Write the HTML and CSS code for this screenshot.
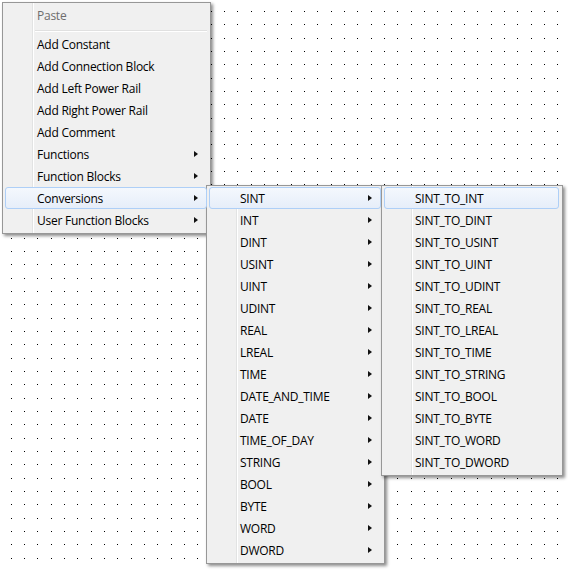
FILE: index.html
```html
<!DOCTYPE html>
<html>
<head>
    <meta name="viewport" content="width=device-width, initial-scale=1">
    <title>Diagram Context Menu</title>
    <link rel="stylesheet" href="styles.css">
</head>
<body>
    <div class="canvas">
        <!-- main context menu -->
        <div class="menu menu-main">
            <div class="menu-item disabled">Paste</div>
            <div class="menu-sep"></div>
            <div class="menu-item">Add Constant</div>
            <div class="menu-item">Add Connection Block</div>
            <div class="menu-item">Add Left Power Rail</div>
            <div class="menu-item">Add Right Power Rail</div>
            <div class="menu-item">Add Comment</div>
            <div class="menu-item has-sub">Functions</div>
            <div class="menu-item has-sub">Function Blocks</div>
            <div class="menu-item has-sub active">Conversions</div>
            <div class="menu-item has-sub">User Function Blocks</div>
        </div>

        <!-- Conversions submenu -->
        <div class="menu menu-types">
            <div class="menu-item has-sub active">SINT</div>
            <div class="menu-item has-sub">INT</div>
            <div class="menu-item has-sub">DINT</div>
            <div class="menu-item has-sub">USINT</div>
            <div class="menu-item has-sub">UINT</div>
            <div class="menu-item has-sub">UDINT</div>
            <div class="menu-item has-sub">REAL</div>
            <div class="menu-item has-sub">LREAL</div>
            <div class="menu-item has-sub">TIME</div>
            <div class="menu-item has-sub">DATE_AND_TIME</div>
            <div class="menu-item has-sub">DATE</div>
            <div class="menu-item has-sub">TIME_OF_DAY</div>
            <div class="menu-item has-sub">STRING</div>
            <div class="menu-item has-sub">BOOL</div>
            <div class="menu-item has-sub">BYTE</div>
            <div class="menu-item has-sub">WORD</div>
            <div class="menu-item has-sub">DWORD</div>
        </div>

        <!-- SINT submenu -->
        <div class="menu menu-sint">
            <div class="menu-item active">SINT_TO_INT</div>
            <div class="menu-item">SINT_TO_DINT</div>
            <div class="menu-item">SINT_TO_USINT</div>
            <div class="menu-item">SINT_TO_UINT</div>
            <div class="menu-item">SINT_TO_UDINT</div>
            <div class="menu-item">SINT_TO_REAL</div>
            <div class="menu-item">SINT_TO_LREAL</div>
            <div class="menu-item">SINT_TO_TIME</div>
            <div class="menu-item">SINT_TO_STRING</div>
            <div class="menu-item">SINT_TO_BOOL</div>
            <div class="menu-item">SINT_TO_BYTE</div>
            <div class="menu-item">SINT_TO_WORD</div>
            <div class="menu-item">SINT_TO_DWORD</div>
        </div>
    </div>
</body>
</html>
```

FILE: styles.css
```css
body {
    margin: 0;
    padding: 0;
    font-family: "Open Sans", Arial, sans-serif;
    font-size: 12px;
    letter-spacing: -0.25px;
    color: #000;
}

/* dotted diagram grid, 3 dots per 40px tile (13/14/13 spacing) */
.canvas {
    position: relative;
    width: 568px;
    height: 570px;
    overflow: hidden;
    background-color: #fff;
    background-image:
        linear-gradient(to right, transparent 0 1px, #fff 1px 13px, transparent 13px 14px, #fff 14px 27px, transparent 27px 28px, #fff 28px),
        linear-gradient(to bottom, #000 0 1px, #fff 1px 13px, #000 13px 14px, #fff 14px 27px, #000 27px 28px, #fff 28px);
    background-size: 40px 40px;
    background-position: 24px 11px;
}

.menu {
    position: absolute;
    box-sizing: border-box;
    background: #f0f0f0;
    border: 1px solid #979797;
    padding: 1px 3px 2px 2px;
    box-shadow: 2px 2px 3px rgba(0,0,0,0.45);
}

.menu::before {
    content: "";
    position: absolute;
    left: 29px;
    top: 0;
    bottom: 0;
    width: 1px;
    background: #e2e3e3;
    border-right: 1px solid #fff;
}

.menu-main {
    left: 2px;
    top: 2px;
    width: 209px;
}

.menu-types {
    left: 206px;
    top: 185px;
    width: 179px;
}

.menu-sint {
    left: 381px;
    top: 185px;
    width: 182px;
}

.menu-item {
    position: relative;
    z-index: 1;
    height: 22px;
    line-height: 22px;
    padding-left: 31px;
    white-space: nowrap;
    border: 1px solid transparent;
    box-sizing: border-box;
    border-radius: 3px;
}

.menu-types .menu-item,
.menu-sint .menu-item {
    padding-left: 30px;
}

.menu-item.disabled {
    color: #6d6d6d;
}

.menu-item.active {
    border-color: #aecff7;
    background: linear-gradient(#f4f8fd, #e6eef9);
}

.menu-item.has-sub::after {
    content: "";
    position: absolute;
    right: 8px;
    top: 7px;
    border-left: 4px solid #111;
    border-top: 3.5px solid transparent;
    border-bottom: 3.5px solid transparent;
}

.menu-sep {
    position: relative;
    z-index: 1;
    height: 0;
    margin: 4px 0 1px 30px;
    border-top: 1px solid #e0e0e0;
    border-bottom: 1px solid #fff;
}
```
